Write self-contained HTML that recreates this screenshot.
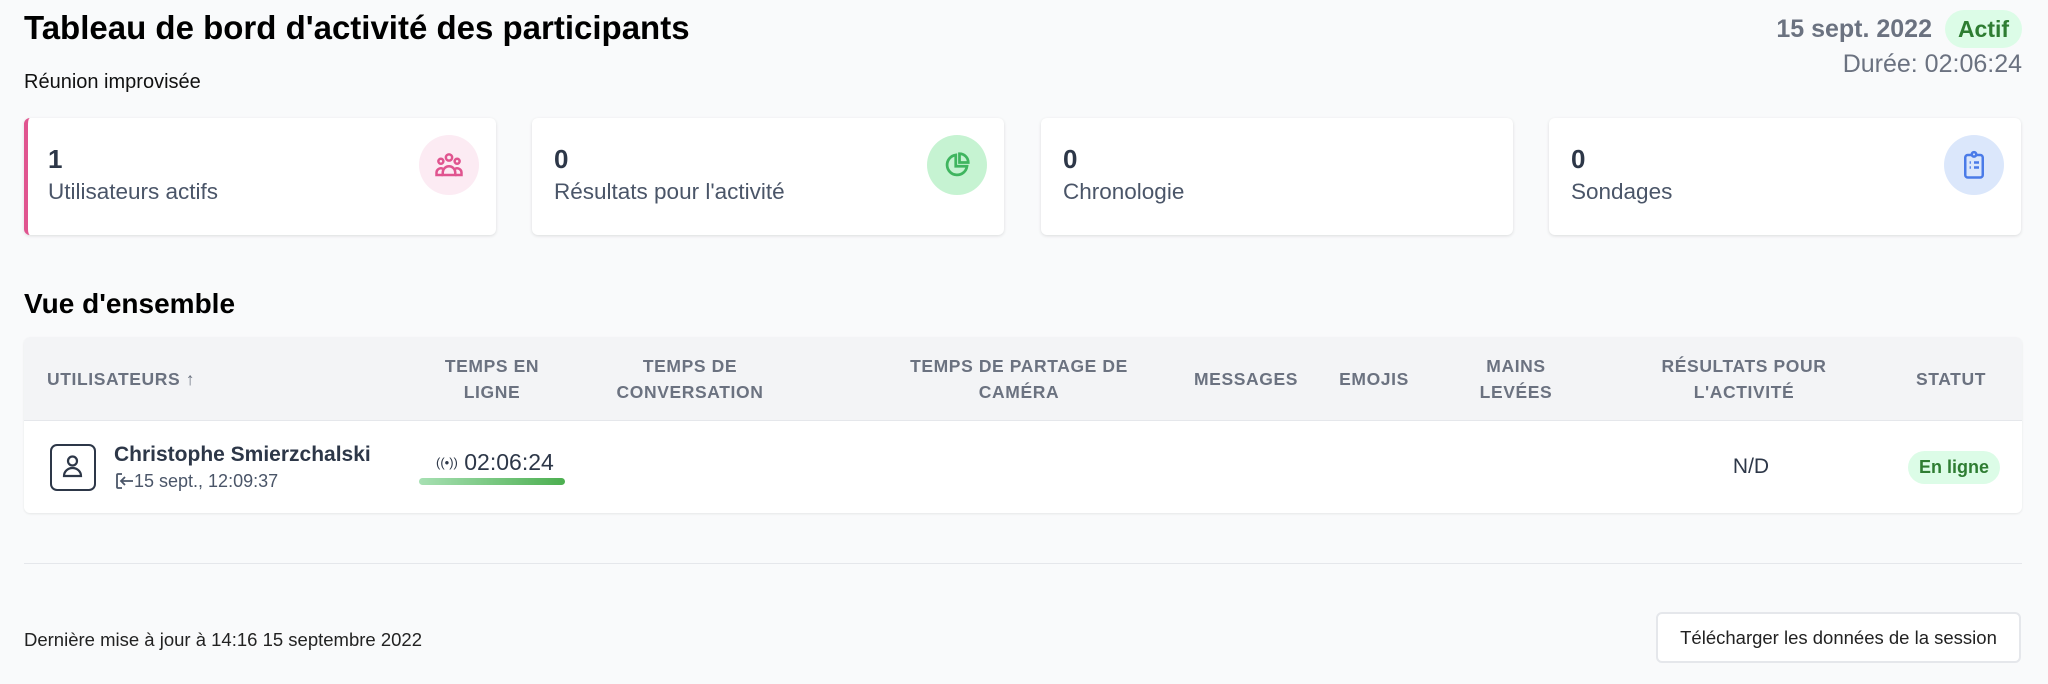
<!DOCTYPE html>
<html><head><meta charset="utf-8"><style>
*{box-sizing:border-box;margin:0;padding:0}
body{width:2048px;height:684px;background:#f9fafb;font-family:"Liberation Sans",sans-serif;color:#111;position:relative;overflow:hidden}
.a{position:absolute;white-space:nowrap}
.card{position:absolute;top:118px;height:117px;width:472px;background:#fff;border-radius:6px;box-shadow:0 1px 3px rgba(0,0,0,.12)}
.card .n{position:absolute;left:22px;top:26px;font-size:26px;font-weight:bold;color:#2d3748}
.card .l{position:absolute;left:22px;top:61px;font-size:22.5px;color:#4a5568}
.ic{position:absolute;right:17px;top:17px;width:60px;height:60px;border-radius:50%;display:flex;align-items:center;justify-content:center}
.th{position:absolute;font-size:17.5px;font-weight:bold;color:#6b7280;text-align:center;line-height:26px;transform:translate(-50%,-50%);top:379px;white-space:nowrap;letter-spacing:.6px}
</style></head><body>
<div class="a" style="left:24px;top:9px;font-size:33px;font-weight:bold;color:#000">Tableau de bord d'activité des participants</div>
<div class="a" style="left:24px;top:71px;font-size:20px;color:#111">Réunion improvisée</div>
<div class="a" style="right:116px;top:15px;font-size:25px;font-weight:bold;color:#6b7280">15 sept. 2022</div>
<div class="a" style="left:1945px;top:10px;width:77px;height:38px;border-radius:19px;background:#dcfce7;color:#2e7d32;font-size:23px;font-weight:bold;text-align:center;line-height:38px">Actif</div>
<div class="a" style="right:26px;top:50px;font-size:25px;color:#6b7280">Durée: 02:06:24</div>

<div class="card" style="left:24px;border-left:4px solid #e0548f"><div class="n" style="left:20px">1</div><div class="l" style="left:20px">Utilisateurs actifs</div>
<div class="ic" style="background:#fcebf3"><svg width="30" height="30" viewBox="0 0 24 24" fill="none" stroke="#e0548f" stroke-width="2"><circle cx="12" cy="6" r="2.5"/><circle cx="5.5" cy="9" r="2"/><circle cx="18.5" cy="9" r="2"/><path d="M7 20v-2a5 5 0 0 1 10 0v2z"/><path d="M7 20H2v-2a3.5 3.5 0 0 1 5-3"/><path d="M17 20h5v-2a3.5 3.5 0 0 0-5-3"/></svg></div></div>
<div class="card" style="left:532px"><div class="n">0</div><div class="l">Résultats pour l'activité</div>
<div class="ic" style="background:#c6f3d2"><svg width="30" height="30" viewBox="0 0 24 24" fill="none" stroke="#3fb55f" stroke-width="2.2"><path d="M11 4a8 8 0 1 0 9 9h-9z"/><path d="M14 3v7h7a7 7 0 0 0-7-7z"/></svg></div></div>
<div class="card" style="left:1041px"><div class="n">0</div><div class="l">Chronologie</div></div>
<div class="card" style="left:1549px"><div class="n">0</div><div class="l">Sondages</div>
<div class="ic" style="background:#dbe7fb"><svg width="30" height="30" viewBox="0 0 24 24" fill="none" stroke="#4a7be8" stroke-width="2"><rect x="5" y="4" width="14" height="18" rx="2"/><circle cx="12" cy="3.5" r="1.8" fill="#dbe7fb"/><path d="M8.5 10h1M12 10h4M8.5 14h1M12 14h4"/></svg></div></div>

<div class="a" style="left:24px;top:288px;font-size:28px;font-weight:bold;color:#000">Vue d'ensemble</div>

<div class="a" style="left:24px;top:337px;width:1998px;height:176px;background:#fff;border-radius:6px;box-shadow:0 1px 2px rgba(0,0,0,.08);overflow:hidden">
<div style="height:84px;background:#f3f4f6;border-bottom:1px solid #e5e7eb"></div></div>
<div class="th" style="left:47px;transform:translate(0,-50%)">UTILISATEURS ↑</div>
<div class="th" style="left:492px">TEMPS EN<br>LIGNE</div>
<div class="th" style="left:690px">TEMPS DE<br>CONVERSATION</div>
<div class="th" style="left:1019px">TEMPS DE PARTAGE DE<br>CAMÉRA</div>
<div class="th" style="left:1246px">MESSAGES</div>
<div class="th" style="left:1374px">EMOJIS</div>
<div class="th" style="left:1516px">MAINS<br>LEVÉES</div>
<div class="th" style="left:1744px">RÉSULTATS POUR<br>L'ACTIVITÉ</div>
<div class="th" style="left:1951px">STATUT</div>

<div class="a" style="left:50px;top:444px;width:46px;height:47px;border:2.5px solid #2d3748;border-radius:7px"><svg width="41" height="42" viewBox="0 0 41 42" fill="none" stroke="#2d3748" stroke-width="2.2"><circle cx="20.5" cy="15" r="4.5"/><path d="M12 30a8.5 8 0 0 1 17 0z"/></svg></div>
<div class="a" style="left:114px;top:443px;font-size:21px;font-weight:bold;color:#2d3748">Christophe Smierzchalski</div>
<div class="a" style="left:114px;top:471px;font-size:18px;color:#4a5568"><svg width="20" height="20" viewBox="0 0 20 20" fill="none" stroke="#4a5568" stroke-width="1.8" style="vertical-align:-4px"><path d="M8 3H4a1 1 0 0 0-1 1v12a1 1 0 0 0 1 1h4"/><path d="M19 10H8M11 6l-4 4 4 4"/></svg>15 sept., 12:09:37</div>
<div class="a" style="left:436px;top:449px;font-size:23px;color:#2d3748"><span style="font-size:13px;vertical-align:3px">((•))</span> 02:06:24</div>
<div class="a" style="left:419px;top:478px;width:146px;height:7px;border-radius:4px;background:linear-gradient(90deg,#a7e0b3,#4caf50)"></div>
<div class="a" style="left:1751px;top:455px;transform:translateX(-50%);font-size:21px;color:#2d3748">N/D</div>
<div class="a" style="left:1908px;top:451px;width:92px;height:33px;border-radius:17px;background:#dcfce7;color:#2e7d32;font-size:18px;font-weight:bold;text-align:center;line-height:33px">En ligne</div>

<div class="a" style="left:24px;top:563px;width:1998px;height:1px;background:#e5e7eb"></div>
<div class="a" style="left:24px;top:629px;font-size:18.5px;color:#222">Dernière mise à jour à 14:16 15 septembre 2022</div>
<div class="a" style="left:1656px;top:612px;width:365px;height:51px;background:#fff;border:2px solid #e5e7eb;border-radius:6px;font-size:18.5px;color:#222;text-align:center;line-height:47px">Télécharger les données de la session</div>
</body></html>
